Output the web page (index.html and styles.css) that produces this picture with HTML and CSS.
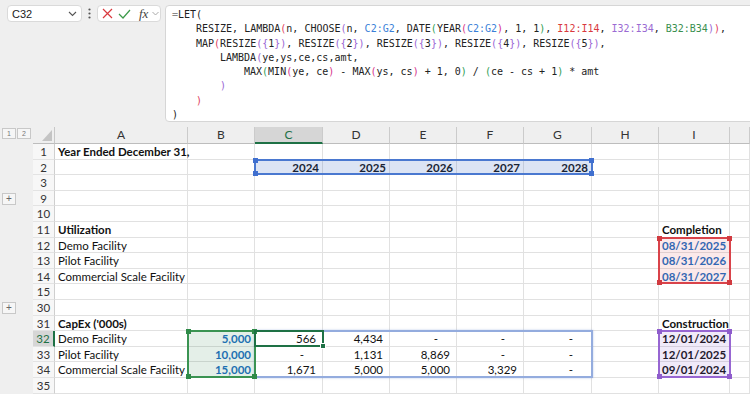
FILE: index.html
```html
<!DOCTYPE html>
<html>
<head>
<meta charset="utf-8">
<title>Sheet</title>
<link rel="stylesheet" href="styles.css">
</head>
<body>
<div class="topbar">
  <div class="namebox"><span>C32</span><svg width="9" height="6" viewBox="0 0 9 6"><path d="M1 1l3.5 3.5L8 1" stroke="#555" stroke-width="1.1" fill="none"/></svg></div>
  <div class="dots"><svg width="3" height="11" viewBox="0 0 3 11"><circle cx="1.5" cy="1.5" r="1.1" fill="#555"/><circle cx="1.5" cy="5.5" r="1.1" fill="#555"/><circle cx="1.5" cy="9.5" r="1.1" fill="#555"/></svg></div>
  <div class="fxbox">
    <svg class="ic-x" width="11" height="11" viewBox="0 0 11 11"><path d="M1 1l9 9M10 1l-9 9" stroke="#d9393e" stroke-width="1.2" fill="none"/></svg>
    <svg class="ic-ok" width="13" height="10" viewBox="0 0 13 10"><path d="M1 5l4 4 7-8" stroke="#3c9a4a" stroke-width="1.2" fill="none"/></svg>
    <span class="fx">fx</span>
    <svg class="ic-dd" width="7" height="5" viewBox="0 0 7 5"><path d="M0.5 1l3 3 3-3" stroke="#aaa" stroke-width="1" fill="none"/></svg>
  </div>
  <div class="formula">
    <div class="ln"><span class="eq">=</span>LET(</div>
    <div class="ln i1">RESIZE, LAMBDA<span class="p2">(</span>n, CHOOSE<span class="p3">(</span>n, <span class="rb">C2:G2</span>, DATE<span class="p4">(</span>YEAR<span class="p5">(</span><span class="rb">C2:G2</span><span class="p5">)</span>, 1, 1<span class="p4">)</span>, <span class="rr">I12:I14</span>, <span class="rp">I32:I34</span>, <span class="rg">B32:B34</span><span class="p3">)</span><span class="p2">)</span>,</div>
    <div class="ln i1">MAP<span class="p2">(</span>RESIZE<span class="p3">({</span>1<span class="p3">})</span>, RESIZE<span class="p3">({</span>2<span class="p3">})</span>, RESIZE<span class="p3">({</span>3<span class="p3">})</span>, RESIZE<span class="p3">({</span>4<span class="p3">})</span>, RESIZE<span class="p3">({</span>5<span class="p3">})</span>,</div>
    <div class="ln i2">LAMBDA<span class="p3">(</span>ye,ys,ce,cs,amt,</div>
    <div class="ln i3">MAX<span class="p4">(</span>MIN<span class="p5">(</span>ye, ce<span class="p5">)</span> - MAX<span class="p5">(</span>ys, cs<span class="p5">)</span> + 1, 0<span class="p4">)</span> / <span class="p4">(</span>ce - cs + 1<span class="p4">)</span> * amt</div>
    <div class="ln i2"><span class="p3">)</span></div>
    <div class="ln i1"><span class="p2">)</span></div>
    <div class="ln">)</div>
  </div>
</div>

<div class="sheet">
  <div class="grid">
    <!-- header -->
    <div class="g"><div class="obtns"><span class="ob">1</span><span class="ob">2</span></div></div>
    <div class="corner"><svg width="10" height="11" viewBox="0 0 10 11"><path d="M10 0V11H0Z" fill="#c4c4c4"/></svg></div>
    <div class="ch">A</div><div class="ch">B</div><div class="ch sel">C</div><div class="ch">D</div><div class="ch">E</div><div class="ch">F</div><div class="ch">G</div><div class="ch">H</div><div class="ch">I</div><div class="ch"></div>

    <!-- 1 -->
    <div class="g"></div><div class="rh">1</div>
    <div class="c b">Year Ended December 31,</div><div class="c"></div><div class="c"></div><div class="c"></div><div class="c"></div><div class="c"></div><div class="c"></div><div class="c"></div><div class="c"></div><div class="c"></div>
    <!-- 2 -->
    <div class="g"></div><div class="rh">2</div>
    <div class="c"></div><div class="c"></div><div class="c b r">2024</div><div class="c b r">2025</div><div class="c b r">2026</div><div class="c b r">2027</div><div class="c b r">2028</div><div class="c"></div><div class="c"></div><div class="c"></div>
    <!-- 3 -->
    <div class="g"></div><div class="rh">3</div>
    <div class="c"></div><div class="c"></div><div class="c"></div><div class="c"></div><div class="c"></div><div class="c"></div><div class="c"></div><div class="c"></div><div class="c"></div><div class="c"></div>
    <!-- 9 -->
    <div class="g"><span class="plus">+</span></div><div class="rh">9</div>
    <div class="c"></div><div class="c"></div><div class="c"></div><div class="c"></div><div class="c"></div><div class="c"></div><div class="c"></div><div class="c"></div><div class="c"></div><div class="c"></div>
    <!-- 10 -->
    <div class="g"></div><div class="rh">10</div>
    <div class="c"></div><div class="c"></div><div class="c"></div><div class="c"></div><div class="c"></div><div class="c"></div><div class="c"></div><div class="c"></div><div class="c"></div><div class="c"></div>
    <!-- 11 -->
    <div class="g"></div><div class="rh">11</div>
    <div class="c b">Utilization</div><div class="c"></div><div class="c"></div><div class="c"></div><div class="c"></div><div class="c"></div><div class="c"></div><div class="c"></div><div class="c b">Completion</div><div class="c"></div>
    <!-- 12 -->
    <div class="g"></div><div class="rh">12</div>
    <div class="c">Demo Facility</div><div class="c"></div><div class="c"></div><div class="c"></div><div class="c"></div><div class="c"></div><div class="c"></div><div class="c"></div><div class="c b r in">08/31/2025</div><div class="c"></div>
    <!-- 13 -->
    <div class="g"></div><div class="rh">13</div>
    <div class="c">Pilot Facility</div><div class="c"></div><div class="c"></div><div class="c"></div><div class="c"></div><div class="c"></div><div class="c"></div><div class="c"></div><div class="c b r in">08/31/2026</div><div class="c"></div>
    <!-- 14 -->
    <div class="g"></div><div class="rh">14</div>
    <div class="c">Commercial Scale Facility</div><div class="c"></div><div class="c"></div><div class="c"></div><div class="c"></div><div class="c"></div><div class="c"></div><div class="c"></div><div class="c b r in">08/31/2027</div><div class="c"></div>
    <!-- 15 -->
    <div class="g"></div><div class="rh">15</div>
    <div class="c"></div><div class="c"></div><div class="c"></div><div class="c"></div><div class="c"></div><div class="c"></div><div class="c"></div><div class="c"></div><div class="c"></div><div class="c"></div>
    <!-- 30 -->
    <div class="g"><span class="plus">+</span></div><div class="rh">30</div>
    <div class="c"></div><div class="c"></div><div class="c"></div><div class="c"></div><div class="c"></div><div class="c"></div><div class="c"></div><div class="c"></div><div class="c"></div><div class="c"></div>
    <!-- 31 -->
    <div class="g"></div><div class="rh">31</div>
    <div class="c b">CapEx ('000s)</div><div class="c"></div><div class="c"></div><div class="c"></div><div class="c"></div><div class="c"></div><div class="c"></div><div class="c"></div><div class="c b">Construction</div><div class="c"></div>
    <!-- 32 -->
    <div class="g"></div><div class="rh selr">32</div>
    <div class="c">Demo Facility</div><div class="c b r in">5,000</div><div class="c num">566</div><div class="c num">4,434</div><div class="c dash">-</div><div class="c dash">-</div><div class="c dash">-</div><div class="c"></div><div class="c b r">12/01/2024</div><div class="c"></div>
    <!-- 33 -->
    <div class="g"></div><div class="rh">33</div>
    <div class="c">Pilot Facility</div><div class="c b r in">10,000</div><div class="c dash">-</div><div class="c num">1,131</div><div class="c num">8,869</div><div class="c dash">-</div><div class="c dash">-</div><div class="c"></div><div class="c b r">12/01/2025</div><div class="c"></div>
    <!-- 34 -->
    <div class="g"></div><div class="rh">34</div>
    <div class="c">Commercial Scale Facility</div><div class="c b r in">15,000</div><div class="c num">1,671</div><div class="c num">5,000</div><div class="c num">5,000</div><div class="c num">3,329</div><div class="c dash">-</div><div class="c"></div><div class="c b r">09/01/2024</div><div class="c"></div>
    <!-- 35 -->
    <div class="g"></div><div class="rh">35</div>
    <div class="c"></div><div class="c"></div><div class="c"></div><div class="c"></div><div class="c"></div><div class="c"></div><div class="c"></div><div class="c"></div><div class="c"></div><div class="c"></div>
  </div>

  <div class="overlay">
    <div class="rng blue"><i class="h tl"></i><i class="h tr"></i><i class="h bl"></i><i class="h br"></i></div>
    <div class="rng red"><i class="h tl"></i><i class="h tr"></i><i class="h bl"></i><i class="h br"></i></div>
    <div class="rng purple"><i class="h tl"></i><i class="h tr"></i><i class="h bl"></i><i class="h br"></i></div>
    <div class="spill"></div>
    <div class="rng green"><i class="h tl"></i><i class="h tr"></i><i class="h bl"></i><i class="h br"></i></div>
    <div class="active"><i class="fill"></i></div>
  </div>
</div>
</body>
</html>
```

FILE: styles.css
```css
* { box-sizing: border-box; margin: 0; padding: 0; }
html, body { width: 750px; height: 394px; overflow: hidden; }
body {
  background: #efefef;
  font-family: Lato, "Liberation Sans", Arial, sans-serif;
  color: #111;
}

/* ---------- top bar ---------- */
.topbar {
  display: flex;
  align-items: flex-start;
  height: 127px;
  padding-top: 5px;
}
.namebox {
  margin-left: 7px;
  width: 75px;
  height: 17px;
  background: #fff;
  border: 1px solid #dadada;
  border-radius: 4px;
  display: flex;
  align-items: center;
  justify-content: space-between;
  padding: 0 4px 0 4px;
  font-family: "Liberation Sans", Arial, sans-serif;
  font-size: 11px;
  color: #222;
}
.dots {
  width: 15px;
  height: 17px;
  display: flex;
  align-items: center;
  justify-content: center;
}
.fxbox {
  width: 64px;
  height: 17px;
  background: #fff;
  border: 1px solid #dadada;
  border-radius: 4px;
  display: flex;
  align-items: center;
  padding-left: 4px;
}
.ic-ok { margin-left: 5px; }
.fx {
  margin-left: 8px;
  font-family: "Liberation Serif", serif;
  font-style: italic;
  font-size: 13px;
  color: #444;
  line-height: 15px;
}
.ic-dd { margin-left: 4px; }
.formula {
  margin-left: 4px;
  margin-right: -10px;
  flex: 1;
  height: 117px;
  background: #fff;
  border: 1px solid #d6d6d6;
  border-radius: 4px;
  padding: 2px 0 0 6px;
  font-family: "DejaVu Sans Mono", "Liberation Mono", monospace;
  font-size: 10px;
  line-height: 14.3px;
  color: #222;
}
.ln { white-space: pre; height: 14.3px; }
.i1 { padding-left: 24px; }
.i2 { padding-left: 48px; }
.i3 { padding-left: 72px; }
.eq { color: #888; }
.p2 { color: #e0405e; }
.p3 { color: #9a66d4; }
.p4 { color: #2e9e55; }
.p5 { color: #d6338c; }
.rb { color: #3a7fd8; }
.rr { color: #d9393e; }
.rp { color: #9b6bd3; }
.rg { color: #3a8f4f; }

/* ---------- sheet ---------- */
.sheet { position: relative; }
.grid, .overlay {
  display: grid;
  grid-template-columns: 33px 22px 133px 67px 68px 67px 67px 67px 68px 67px 71px 1fr;
  grid-template-rows: 17px repeat(16, 15.6px);
}
.grid { background: #fff; }
.overlay {
  position: absolute;
  inset: 0;
  pointer-events: none;
}

.g { background: #efefef; position: relative; }
.obtns {
  display: flex;
  gap: 1px;
  padding: 1px 0 0 2px;
}
.ob {
  width: 14px;
  height: 11px;
  border: 1px solid #c8c8c8;
  background: #f6f6f6;
  font-family: "Liberation Sans", Arial, sans-serif;
  font-size: 7px;
  line-height: 9px;
  color: #777;
  text-align: center;
}
.plus {
  display: block;
  margin: 2px 0 0 2px;
  width: 14px;
  height: 12px;
  border: 1px solid #c8c8c8;
  background: #f6f6f6;
  font-family: "Liberation Sans", Arial, sans-serif;
  font-size: 10px;
  line-height: 10px;
  color: #666;
  text-align: center;
}
.corner {
  background: #efefef;
  border-right: 1px solid #c8c8c8;
  border-bottom: 1px solid #bdbdbd;
  display: flex;
  align-items: flex-end;
  justify-content: flex-end;
  padding: 0 2px 2px 0;
}
.ch {
  background: #efefef;
  border-right: 1px solid #cbcbcb;
  border-bottom: 1px solid #bdbdbd;
  text-align: center;
  font-size: 12px;
  line-height: 16px;
  color: #333;
}
.ch.sel {
  background: #d6d6d6;
  color: #1e7145;
  border-bottom: 2px solid #1e7145;
}
.rh {
  background: #f7f7f7;
  border-right: 1px solid #cfcfcf;
  border-bottom: 1px solid #e3e3e3;
  text-align: center;
  font-size: 11.5px;
  line-height: 15px;
  color: #333;
}
.rh.selr {
  background: #d6d6d6;
  color: #1e7145;
  border-right: 2px solid #1e7145;
}
.c {
  border-right: 1px solid #e1e1e1;
  border-bottom: 1px solid #e1e1e1;
  font-size: 11.5px;
  line-height: 15px;
  padding: 0 3px;
  white-space: nowrap;
  color: #111;
}
.b { font-weight: bold; }
.r { text-align: right; }
.in { color: #1b6ec2; }
.num { text-align: right; padding-right: 6px; }
.dash { text-align: right; padding-right: 18px; }

/* ---------- overlays ---------- */
.rng {
  position: relative;
  border: 2px solid;
  margin: -1px -1px 0 -1px;
}
.h {
  position: absolute;
  width: 5px;
  height: 5px;
  background: currentColor;
}
.tl { top: -3px; left: -3px; }
.tr { top: -3px; right: -3px; }
.bl { bottom: -3px; left: -3px; }
.br { bottom: -3px; right: -3px; }

.blue {
  grid-column: 5 / 10; grid-row: 3 / 4;
  color: #3f6fcf; border-color: #4a78d0;
  background: rgba(68, 114, 196, 0.19);
}
.red {
  grid-column: 11 / 12; grid-row: 8 / 11;
  color: #d13a40; border-color: #d9434a;
  background: rgba(215, 55, 60, 0.11);
}
.purple {
  grid-column: 11 / 12; grid-row: 14 / 17;
  color: #8e5ccc; border-color: #9766d2;
  background: rgba(140, 90, 205, 0.13);
}
.green {
  grid-column: 4 / 5; grid-row: 14 / 17;
  color: #2f8a48; border-color: #3a9352;
  background: rgba(50, 135, 75, 0.13);
}
.spill {
  grid-column: 5 / 10; grid-row: 14 / 17;
  margin: -1px -1px 0 -1px;
  border: 2px solid #94acde;
  box-shadow: 0 0 2px rgba(120, 150, 210, 0.5);
}
.active {
  grid-column: 5 / 6; grid-row: 14 / 15;
  position: relative;
  margin: -1px -1px 0 -1px;
  border: 2px solid #1e7145;
}
.fill {
  position: absolute;
  right: -4px;
  bottom: -4px;
  width: 6px;
  height: 6px;
  background: #1e7145;
  border: 1px solid #fff;
}
```
